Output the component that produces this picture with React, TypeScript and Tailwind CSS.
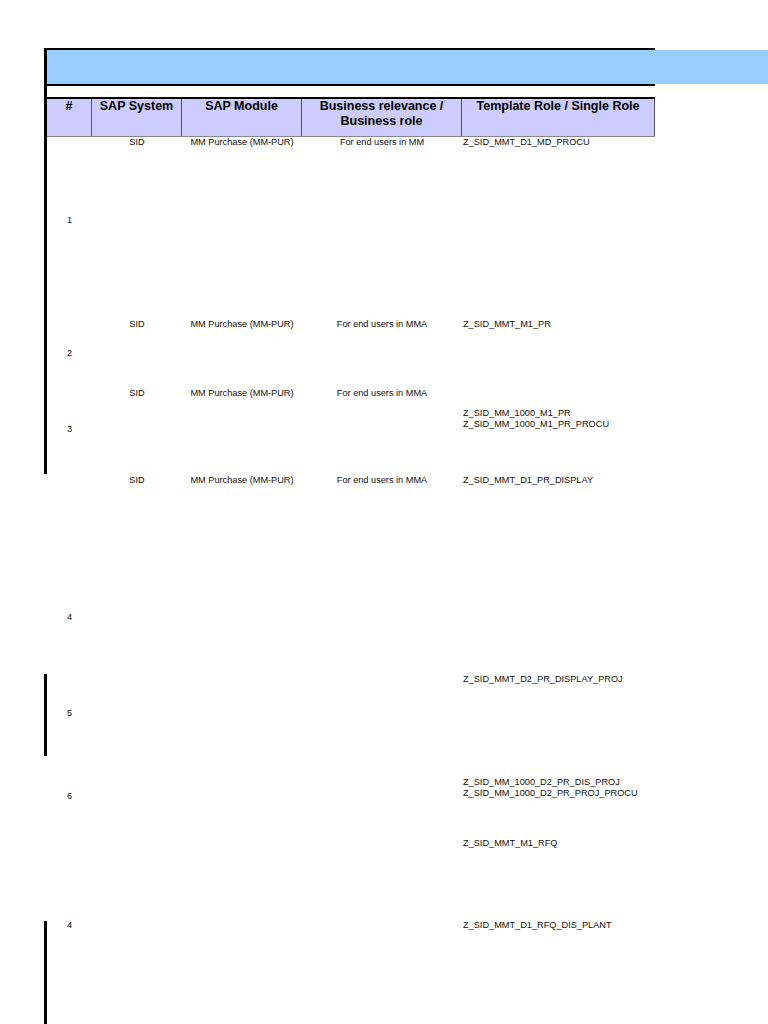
const font = { fontFamily: '"Liberation Sans", Arial, sans-serif' };

type Row = {
  h: number;
  num?: string;
  numTop: number;
  textTop: number;
  sys?: string;
  mod?: string;
  biz?: string;
  roles: string[];
  roleTop: number;
};

const cols = ["w-[45px]", "w-[90px]", "w-[120px]", "w-[160px]", "w-[193px]"];

const topRows: Row[] = [
  { h: 173, num: "1", numTop: 78, textTop: 0, sys: "SID", mod: "MM Purchase (MM-PUR)", biz: "For end users in MM", roles: ["Z_SID_MMT_D1_MD_PROCU"], roleTop: 0 },
  { h: 75, num: "2", numTop: 38, textTop: 9, sys: "SID", mod: "MM Purchase (MM-PUR)", biz: "For end users in MMA", roles: ["Z_SID_MMT_M1_PR"], roleTop: 9 },
  { h: 89, num: "3", numTop: 39, textTop: 3, sys: "SID", mod: "MM Purchase (MM-PUR)", biz: "For end users in MMA", roles: ["Z_SID_MM_1000_M1_PR", "Z_SID_MM_1000_M1_PR_PROCU"], roleTop: 23 },
];

function DataRow({ r }: { r: Row }) {
  return (
    <div className="flex text-[9.2px] leading-[11px] text-[#111]" style={{ height: r.h }}>
      <div className={`${cols[0]} text-center`} style={{ paddingTop: r.numTop }}>{r.num}</div>
      <div className={`${cols[1]} text-center`} style={{ paddingTop: r.textTop }}>{r.sys}</div>
      <div className={`${cols[2]} text-center`} style={{ paddingTop: r.textTop }}>{r.mod}</div>
      <div className={`${cols[3]} text-center`} style={{ paddingTop: r.textTop }}>{r.biz}</div>
      <div className={`${cols[4]} pl-px leading-[10.5px]`} style={{ paddingTop: r.roleTop }}>
        {r.roles.map((t) => (
          <div key={t}>{t}</div>
        ))}
      </div>
    </div>
  );
}

function Bar({ top, h }: { top: number; h?: number }) {
  return (
    <div className="w-[3px] flex flex-col">
      <div style={{ height: top }} />
      <div className={h ? "bg-black" : "bg-black flex-1"} style={h ? { height: h } : undefined} />
    </div>
  );
}

export default function App() {
  const headers = ["#", "SAP System", "SAP Module", "Business relevance / Business role", "Template Role / Single Role"];
  return (
    <div className="w-[768px] h-[1024px] overflow-hidden bg-white pl-[44px] pt-[48px]" style={font}>
      <div className="border-l-[3px] border-black w-[724px]">
        <div className="h-[2px] w-[608px] bg-black" />
        <div className="h-[34px] w-[721px] bg-[#99ccff]" />
        <div className="h-[2px] w-[608px] bg-black" />
        <div className="h-[11px]" />
        <div className="h-[2px] w-[608px] bg-black" />
        <div className="flex h-[38px] w-[608px] bg-[#ccccff] border-b border-[#888]">
          {headers.map((t, i) => (
            <div
              key={t}
              className={`${cols[i]} border-r border-[#555] text-center font-bold text-[12.5px] leading-[14.5px] text-black px-1`}
            >
              {t}
            </div>
          ))}
        </div>
        {topRows.map((r) => (
          <DataRow key={r.num} r={r} />
        ))}
      </div>

      <div className="flex">
        <div className="w-[3px]" />
        <DataRow r={{ h: 186, num: "4", numTop: 138, textTop: 1, sys: "SID", mod: "MM Purchase (MM-PUR)", biz: "For end users in MMA", roles: ["Z_SID_MMT_D1_PR_DISPLAY"], roleTop: 1 }} />
      </div>
      <div className="flex">
        <Bar top={14} h={82} />
        <DataRow r={{ h: 110, num: "5", numTop: 48, textTop: 0, roles: ["Z_SID_MMT_D2_PR_DISPLAY_PROJ"], roleTop: 14 }} />
      </div>
      <div className="flex">
        <div className="w-[3px]" />
        <DataRow r={{ h: 60, num: "6", numTop: 21, textTop: 0, roles: ["Z_SID_MM_1000_D2_PR_DIS_PROJ", "Z_SID_MM_1000_D2_PR_PROJ_PROCU"], roleTop: 7 }} />
      </div>
      <div className="flex">
        <div className="w-[3px]" />
        <DataRow r={{ h: 80, numTop: 0, textTop: 0, roles: ["Z_SID_MMT_M1_RFQ"], roleTop: 8 }} />
      </div>
      <div className="flex h-[114px]">
        <Bar top={11} />
        <DataRow r={{ h: 114, num: "4", numTop: 10, textTop: 0, roles: ["Z_SID_MMT_D1_RFQ_DIS_PLANT"], roleTop: 10 }} />
      </div>
    </div>
  );
}
